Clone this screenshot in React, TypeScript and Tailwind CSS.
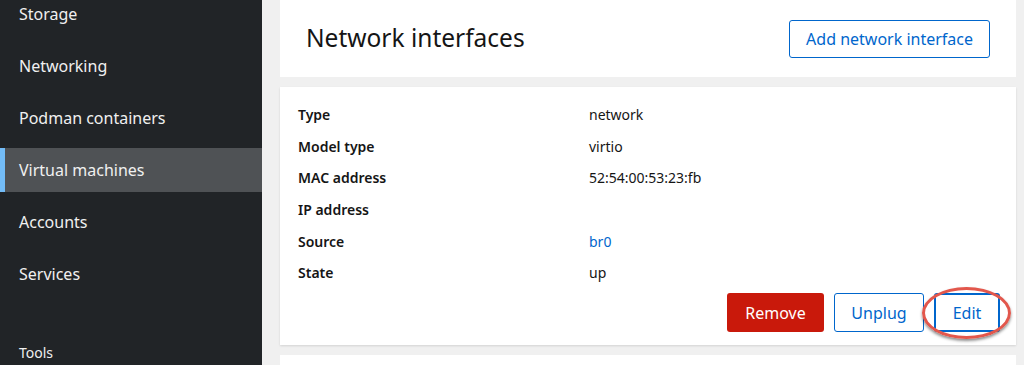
import React from "react";

const navItems = ["Storage", "Networking", "Podman containers", "Virtual machines", "Accounts", "Services"];

const rows: [string, string, boolean?][] = [
  ["Type", "network"],
  ["Model type", "virtio"],
  ["MAC address", "52:54:00:53:23:fb"],
  ["IP address", ""],
  ["Source", "br0", true],
  ["State", "up"],
];

export default function App() {
  return (
    <div className="flex h-[365px] w-[1024px] overflow-hidden bg-[#f0f0f0]" style={{ fontFamily: '"Noto Sans", "Open Sans", sans-serif' }}>
      <aside className="flex w-[262px] shrink-0 flex-col bg-[#212427] text-[16px] text-[#f0f0f0]">
        <div className="-mt-[8px] flex flex-col">
          {navItems.map((item) => {
            const active = item === "Virtual machines";
            return (
              <div
                key={item}
                className={`flex h-[44px] items-center mb-[8px] ${active ? "bg-[#4f5255] border-l-[5px] border-[#73bcf7] pl-[14px]" : "pl-[19px]"}`}
              >
                {item}
              </div>
            );
          })}
        </div>
        <div className="mt-auto mb-[2px] pl-[19px] text-[14px] leading-[20px] text-[#f0f0f0]">Tools</div>
      </aside>
      <main className="flex flex-1 flex-col gap-[10px] pl-[18px] pr-[8px]">
        <section className="flex h-[77px] shrink-0 items-center justify-between bg-white pl-[26px] pr-[26px]">
          <h2 className="text-[24.5px] font-normal text-[#151515]">Network interfaces</h2>
          <button className="h-[38px] rounded-[3px] border border-[#0066cc] px-[16px] text-[16px] text-[#0066cc]">
            Add network interface
          </button>
        </section>
        <section className="relative flex h-[258px] shrink-0 flex-col bg-white pl-[18px] pr-[16px] pt-[12px] shadow-[0_1px_2px_rgba(0,0,0,0.12)]">
          <div className="flex flex-col">
            {rows.map(([k, v, link]) => (
              <div key={k} className="flex h-[31.6px] items-center text-[14px]">
                <div className="w-[291px] font-semibold text-[#151515]">{k}</div>
                <div className={link ? "text-[#0066cc]" : "text-[#151515]"}>{v}</div>
              </div>
            ))}
          </div>
          <div className="mt-auto mb-[13px] flex justify-end gap-[10px]">
            <button className="h-[39px] w-[97px] rounded-[3px] bg-[#c9190b] text-[16px] text-white">Remove</button>
            <button className="h-[39px] w-[90px] rounded-[3px] border border-[#0066cc] text-[16px] text-[#0066cc]">Unplug</button>
            <div className="relative">
              <button className="h-[39px] w-[66px] rounded-[3px] border-2 border-[#0066cc] text-[16px] text-[#0066cc]">Edit</button>
              <div className="pointer-events-none absolute left-[-12px] top-[-6px] h-[52px] w-[89px] rounded-[50%] border-[3px] border-[#e2574c] shadow-[0_2px_3px_rgba(0,0,0,0.45)]" />
            </div>
          </div>
        </section>
        <section className="h-[40px] shrink-0 bg-white" />
      </main>
    </div>
  );
}
